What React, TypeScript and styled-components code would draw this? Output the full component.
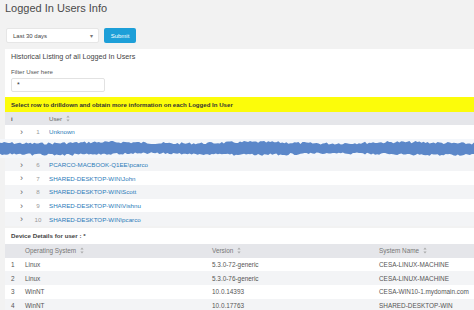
import styled, { createGlobalStyle } from 'styled-components';

const GlobalStyle = createGlobalStyle`
  html, body {
    margin: 0;
    padding: 0;
    background: #f2f2f2;
    font-family: "Liberation Sans", Arial, sans-serif;
    color: #555;
    overflow: hidden;
  }
`;

const users = [
  { id: 6, name: 'PCARCO-MACBOOK-Q1EE\\pcarco' },
  { id: 7, name: 'SHARED-DESKTOP-WIN\\John' },
  { id: 8, name: 'SHARED-DESKTOP-WIN\\Scott' },
  { id: 9, name: 'SHARED-DESKTOP-WIN\\Vishnu' },
  { id: 10, name: 'SHARED-DESKTOP-WIN\\pcarco' },
];

const devices = [
  { os: 'Linux', version: '5.3.0-72-generic', system: 'CESA-LINUX-MACHINE' },
  { os: 'Linux', version: '5.3.0-76-generic', system: 'CESA-LINUX-MACHINE' },
  { os: 'WinNT', version: '10.0.14393', system: 'CESA-WIN10-1.mydomain.com' },
  { os: 'WinNT', version: '10.0.17763', system: 'SHARED-DESKTOP-WIN' },
];

// jagged edge, same every render
const buildWave = () => {
  let seed = 7;
  const rnd = () => {
    seed = (seed * 9301 + 49297) % 233280;
    return seed / 233280;
  };
  const top: string[] = [];
  const bottom: string[] = [];
  for (let x = 0; x <= 480; x += 2) {
    top.push(`${x},${(2.6 + rnd() * 2.4 + Math.sin(x / 23) * 0.7).toFixed(1)}`);
  }
  for (let x = 480; x >= 0; x -= 2) {
    bottom.push(`${x},${(14 + rnd() * 2.2 + Math.sin(x / 31) * 0.7).toFixed(1)}`);
  }
  return `M${top.join(' L')} L${bottom.join(' L')} Z`;
};
const wavePath = buildWave();

const SortIcon = () => (
  <SortGlyph viewBox="0 0 4 7">
    <path d="M2 0.5 L3.6 2.6 H0.4 Z M2 6.5 L3.6 4.4 H0.4 Z" fill="#aaa" />
  </SortGlyph>
);

const App = () => {
  return (
    <>
      <GlobalStyle />
      <Styled.Page>
        <Styled.Title>Logged In Users Info</Styled.Title>
        <Styled.Toolbar>
          <Styled.Select>
            <span>Last 30 days</span>
            <Styled.Caret>▾</Styled.Caret>
          </Styled.Select>
          <Styled.Submit>Submit</Styled.Submit>
        </Styled.Toolbar>

        <Styled.Panel>
          <Styled.Heading>Historical Listing of all Logged In Users</Styled.Heading>
          <Styled.Label>Filter User here</Styled.Label>
          <Styled.Filter>*</Styled.Filter>
          <Styled.Notice>Select row to drilldown and obtain more information on each Logged In User</Styled.Notice>
          <Styled.UserRow $head>
            <Styled.Info>i</Styled.Info>
            <span />
            <Styled.Name>User <SortIcon /></Styled.Name>
          </Styled.UserRow>
          <Styled.UserRow>
            <Styled.Chevron>›</Styled.Chevron>
            <Styled.Index>1</Styled.Index>
            <Styled.Name $link>Unknown</Styled.Name>
          </Styled.UserRow>
          <Styled.Wave>
            <svg width="100%" height="19" viewBox="0 0 480 19" preserveAspectRatio="none">
              <path d={wavePath} fill="#5b87c9" />
            </svg>
          </Styled.Wave>
          {users.map((u, i) => (
            <Styled.UserRow key={u.id} $striped={i % 2 === 0}>
              <Styled.Chevron>›</Styled.Chevron>
              <Styled.Index>{u.id}</Styled.Index>
              <Styled.Name $link>{u.name}</Styled.Name>
            </Styled.UserRow>
          ))}
        </Styled.Panel>

        <Styled.Panel $second>
          <Styled.SubHeading>Device Details for user : *</Styled.SubHeading>
          <Styled.DeviceRow $head>
            <span />
            <span>Operating System <SortIcon /></span>
            <span>Version <SortIcon /></span>
            <span>System Name <SortIcon /></span>
          </Styled.DeviceRow>
          {devices.map((d, i) => (
            <Styled.DeviceRow key={i} $striped={i % 2 === 1}>
              <span>{i + 1}</span>
              <span>{d.os}</span>
              <span>{d.version}</span>
              <span>{d.system}</span>
            </Styled.DeviceRow>
          ))}
        </Styled.Panel>
      </Styled.Page>
    </>
  );
};

export default App;

const SortGlyph = styled.svg`
  width: 4px;
  height: 7px;
  vertical-align: -1px;
  margin-left: 2px;
`;

const Styled = {
  Page: styled.div`
    padding: 0 0 0 5px;
    width: 474px;
    box-sizing: border-box;
  `,
  Title: styled.h1`
    margin: 0;
    padding-top: 2px;
    height: 26px;
    font-size: 11px;
    font-weight: normal;
    color: #4a4a4a;
    line-height: 12px;
  `,
  Toolbar: styled.div`
    display: flex;
    align-items: center;
    gap: 5px;
    padding-left: 1px;
    height: 15px;
    margin-bottom: 6px;
  `,
  Select: styled.div`
    width: 93px;
    height: 15px;
    box-sizing: border-box;
    display: flex;
    align-items: center;
    justify-content: space-between;
    padding: 0 5px 0 6px;
    background: #fff;
    border: 1px solid #e6e6e6;
    border-radius: 2px;
    font-size: 6px;
    color: #444;
  `,
  Caret: styled.span`
    font-size: 6px;
    color: #777;
  `,
  Submit: styled.div`
    width: 32px;
    height: 15px;
    display: flex;
    align-items: center;
    justify-content: center;
    background: #1d9fd8;
    border-radius: 2px;
    color: #fff;
    font-size: 6px;
  `,
  Panel: styled.div<{ $second?: boolean }>`
    background: #fff;
    margin-right: -10px;
    margin-top: ${(p) => (p.$second ? '2px' : '0')};
    padding-top: 3px;
  `,
  Heading: styled.div`
    padding-left: 6px;
    font-size: 7.2px;
    line-height: 10px;
    color: #444;
    height: 15px;
  `,
  Label: styled.div`
    padding-left: 6px;
    font-size: 6.1px;
    line-height: 9px;
    color: #555;
    margin-bottom: 2px;
  `,
  Filter: styled.div`
    margin-left: 6px;
    width: 94px;
    height: 14px;
    box-sizing: border-box;
    border: 1px solid #e2e2e2;
    border-radius: 2px;
    padding: 2px 0 0 5px;
    font-size: 7px;
    color: #333;
  `,
  Notice: styled.div`
    margin-top: 5px;
    height: 15px;
    background: #fcfc0a;
    display: flex;
    align-items: center;
    padding-left: 6px;
    font-size: 6.1px;
    font-weight: bold;
    color: #333;
  `,
  UserRow: styled.div<{ $head?: boolean; $striped?: boolean }>`
    display: grid;
    grid-template-columns: 20px 14px 1fr;
    align-items: center;
    height: ${(p) => (p.$head ? '13px' : '13.7px')};
    padding-left: 6px;
    background: ${(p) => (p.$head ? '#e5e6ea' : p.$striped ? '#f3f4f6' : '#fff')};
    font-size: 6.2px;
    color: #666;
  `,
  Info: styled.span`
    font-weight: bold;
    font-size: 6px;
    color: #555;
  `,
  Chevron: styled.span`
    padding-left: 9px;
    font-size: 9px;
    line-height: 6px;
    color: #666;
  `,
  Index: styled.span`
    text-align: center;
    color: #999;
  `,
  Name: styled.span<{ $link?: boolean }>`
    padding-left: 4px;
    color: ${(p) => (p.$link ? '#2b7bb9' : '#666')};
  `,
  Wave: styled.div`
    height: 19px;
    background: #f4f7fb;
    margin-left: -5px;
    display: flex;
    align-items: center;
  `,
  SubHeading: styled.div`
    padding-left: 6px;
    height: 13px;
    font-size: 6.2px;
    font-weight: bold;
    color: #444;
    line-height: 10px;
  `,
  DeviceRow: styled.div<{ $head?: boolean; $striped?: boolean }>`
    display: grid;
    grid-template-columns: 14px 187px 167px 1fr;
    align-items: center;
    height: 13.6px;
    padding-left: 6px;
    background: ${(p) => (p.$head ? '#e5e6ea' : p.$striped ? '#f3f4f6' : '#fff')};
    font-size: 6.4px;
    color: ${(p) => (p.$head ? '#777' : '#555')};
    white-space: nowrap;
  `,
};
